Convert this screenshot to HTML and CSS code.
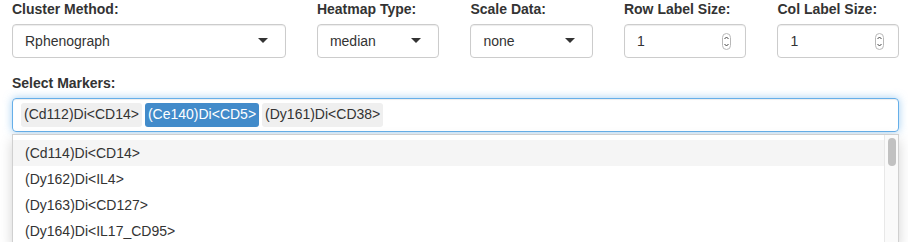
FILE: index.html
```html
<!DOCTYPE html>
<html lang="en">
<head>
  <meta charset="UTF-8">
  <title>Heatmap settings</title>
  <link rel="stylesheet" href="styles.css">
</head>
<body>
  <div class="panel">
    <div class="row">
      <div class="form-group col-wide">
        <label>Cluster Method:</label>
        <div class="select-box">Rphenograph</div>
      </div>
      <div class="form-group col-narrow">
        <label>Heatmap Type:</label>
        <div class="select-box">median</div>
      </div>
      <div class="form-group col-narrow">
        <label>Scale Data:</label>
        <div class="select-box">none</div>
      </div>
      <div class="form-group col-narrow">
        <label>Row Label Size:</label>
        <div class="num-box">
          <span>1</span>
          <svg class="stepper" width="9" height="17" viewBox="0 0 9 17">
            <rect x="0.5" y="0.5" width="8" height="16" rx="4" fill="#fff" stroke="#b8b8b8"/>
            <path d="M2.5 6 L4.5 4 L6.5 6" fill="none" stroke="#444" stroke-width="1"/>
            <path d="M2.5 11 L4.5 13 L6.5 11" fill="none" stroke="#444" stroke-width="1"/>
          </svg>
        </div>
      </div>
      <div class="form-group col-narrow col-last">
        <label>Col Label Size:</label>
        <div class="num-box">
          <span>1</span>
          <svg class="stepper" width="9" height="17" viewBox="0 0 9 17">
            <rect x="0.5" y="0.5" width="8" height="16" rx="4" fill="#fff" stroke="#b8b8b8"/>
            <path d="M2.5 6 L4.5 4 L6.5 6" fill="none" stroke="#444" stroke-width="1"/>
            <path d="M2.5 11 L4.5 13 L6.5 11" fill="none" stroke="#444" stroke-width="1"/>
          </svg>
        </div>
      </div>
    </div>

    <div class="form-group last">
      <label>Select Markers:</label>
      <div class="multi-input">
        <div class="tag">(Cd112)Di&lt;CD14&gt;</div>
        <div class="tag active">(Ce140)Di&lt;CD5&gt;</div>
        <div class="tag">(Dy161)Di&lt;CD38&gt;</div>
      </div>
      <div class="dropdown">
        <div class="options">
          <div class="option hover">(Cd114)Di&lt;CD14&gt;</div>
          <div class="option">(Dy162)Di&lt;IL4&gt;</div>
          <div class="option">(Dy163)Di&lt;CD127&gt;</div>
          <div class="option">(Dy164)Di&lt;IL17_CD95&gt;</div>
        </div>
        <div class="scrollbar"><div class="thumb"></div></div>
      </div>
    </div>
  </div>
</body>
</html>
```

FILE: styles.css
```css
body { margin: 0; font-family: "Liberation Sans", Arial, sans-serif; font-size: 14px; color: #333; background: #fff; overflow: hidden; }
.panel { padding: 0 9px 0 12px; margin-top: -1px; }
.row { display: flex; gap: 31px; }
.form-group { margin-bottom: 15px; }
.form-group.last { margin-bottom: 0; }
.col-wide { width: 275px; }
.col-narrow { width: 123px; }
.col-last { width: 122px; }
label { display: block; font-weight: bold; line-height: 20px; margin-bottom: 5px; }

.select-box, .num-box {
  box-sizing: border-box;
  height: 34px;
  padding: 6px 12px;
  line-height: 20px;
  border: 1px solid #ccc;
  border-radius: 4px;
  box-shadow: inset 0 1px 1px rgba(0,0,0,.075);
  position: relative;
}
.select-box::after {
  content: "";
  position: absolute;
  right: 17px;
  top: 50%;
  margin-top: -3px;
  border-style: solid;
  border-width: 5px 5px 0 5px;
  border-color: #333 transparent transparent transparent;
}
.num-box { display: flex; justify-content: space-between; align-items: center; padding-right: 14px; }
.stepper { display: block; }

.multi-input {
  box-sizing: border-box;
  height: 34px;
  display: flex;
  gap: 3px;
  padding: 4px 8px;
  border: 1px solid #66afe9;
  border-radius: 4px;
  box-shadow: inset 0 1px 1px rgba(0,0,0,.075), 0 0 8px rgba(102,175,233,.6);
}
.tag { background: #efefef; color: #333; border-radius: 3px; padding: 1px 3px; line-height: 20px; }
.tag.active { background: #428bca; color: #fff; }

.dropdown {
  margin-top: 2px;
  display: flex;
  height: 108px;
  border: 1px solid #d0d0d0;
  border-bottom: 0;
  box-shadow: 0 6px 12px rgba(0,0,0,.175);
  background: #fff;
  overflow: hidden;
}
.options { flex: 1; padding: 5px 0 0; }
.option { padding: 3px 12px; line-height: 20px; }
.option.hover { background: #f5f5f5; }
.scrollbar { width: 14px; background: #fafafa; border-left: 1px solid #e8e8e8; padding: 3px 0 0 3px; box-sizing: border-box; }
.thumb { width: 8px; height: 28px; border-radius: 4px; background: #c1c1c1; }
```
